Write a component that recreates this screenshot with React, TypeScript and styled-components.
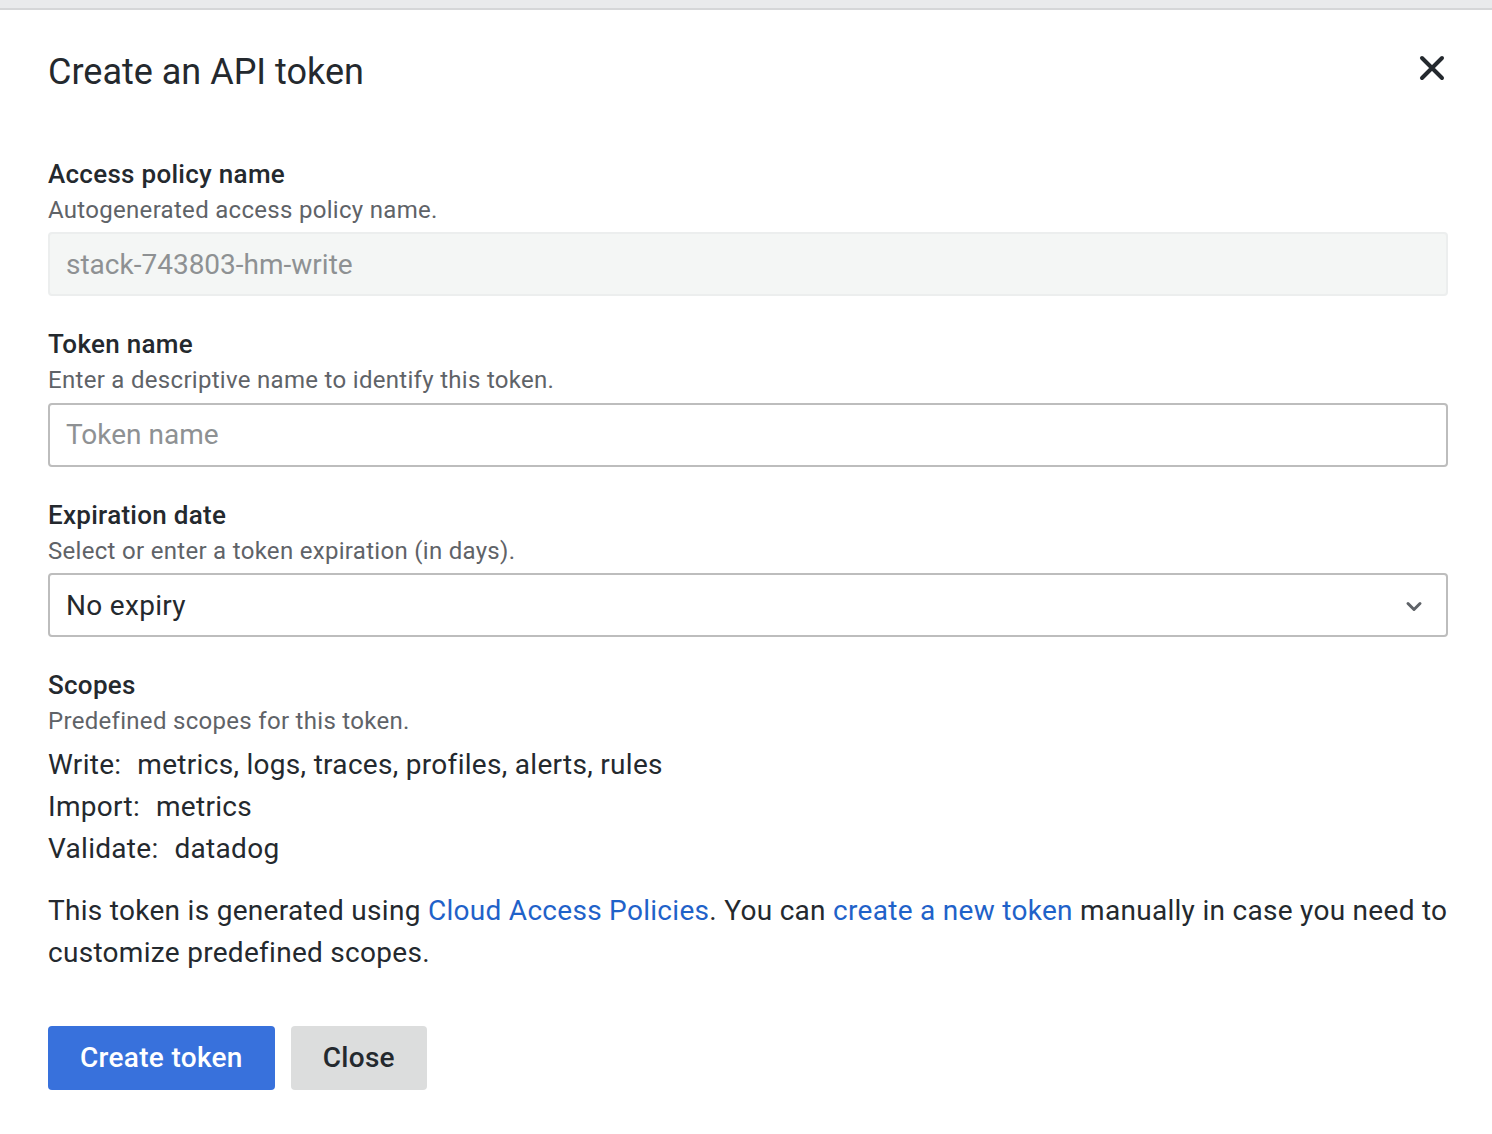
import React from "react";
import styled, { createGlobalStyle } from "styled-components";

const GlobalStyle = createGlobalStyle`
  html, body {
    margin: 0;
    padding: 0;
    background: #ffffff;
    font-family: Roboto, "Liberation Sans", sans-serif;
    color: #24292e;
  }
`;

const Backdrop = styled.div`
  height: 8px;
  background: #e9eaec;
  border-bottom: 2px solid #d5d6d8;
`;

const Modal = styled.div`
  padding: 0 44px 44px 48px;
  height: 1124px;
  box-sizing: border-box;
  background: #ffffff;
  border-radius: 4px 4px 0 0;
`;

const ModalHeader = styled.header`
  display: flex;
  justify-content: space-between;
  align-items: flex-start;
  height: 146px;
  padding-top: 39px;
  box-sizing: border-box;
`;

const Title = styled.h2`
  margin: 0;
  font-size: 36px;
  line-height: 46px;
  font-weight: 400;
  color: #24292e;
`;

const CloseIcon = styled.button`
  display: flex;
  padding: 0;
  margin: 3px 0 0;
  border: 0;
  background: none;
  color: #24292e;
`;

const Field = styled.div`
  margin-bottom: 30px;
`;

const Label = styled.div`
  font-size: 26px;
  line-height: 36px;
  font-weight: 500;
  letter-spacing: 0.28px;
  color: #24292e;
`;

const Description = styled.div`
  font-size: 24px;
  line-height: 36px;
  letter-spacing: 0.3px;
  margin-bottom: 4.4px;
  color: #5f6368;
`;

const InputBox = styled.div<{ $disabled?: boolean }>`
  display: flex;
  align-items: center;
  justify-content: space-between;
  height: 64px;
  box-sizing: border-box;
  padding: 0 22px 0 16px;
  font-size: 28px;
  border-radius: 4px;
  border: 2px solid ${(p) => (p.$disabled ? "#eceeee" : "#bdbdbd")};
  background: ${(p) => (p.$disabled ? "#f4f6f5" : "#ffffff")};
`;

const Placeholder = styled.span`
  color: #8e9193;
`;

const Value = styled.span`
  letter-spacing: 0.3px;
  color: #24292e;
`;

const ScopeList = styled.div`
  margin-top: 1px;
`;

const ScopeRow = styled.div`
  font-size: 28px;
  line-height: 42px;
  letter-spacing: 0.3px;
  color: #24292e;
  white-space: pre;
`;

const ScopeName = styled.span`
  margin-right: 1.4px;
`;

const Paragraph = styled.p`
  margin: 20px -4px 52px 0;
  font-size: 28px;
  line-height: 42px;
  letter-spacing: 0.29px;
  color: #24292e;
`;

const TextLink = styled.a`
  color: #1f62c9;
  text-decoration: none;
`;

const Actions = styled.div`
  display: flex;
  gap: 16px;
`;

const Button = styled.button<{ $primary?: boolean }>`
  height: 64px;
  padding: 0 32px;
  border: 0;
  border-radius: 4px;
  font-family: inherit;
  font-size: 28px;
  font-weight: 500;
  letter-spacing: 0.3px;
  background: ${(p) => (p.$primary ? "#3871dc" : "#dcdddd")};
  color: ${(p) => (p.$primary ? "#ffffff" : "#24292e")};
`;

const App: React.FC = () => (
  <>
    <GlobalStyle />
    <Backdrop />
    <Modal>
      <ModalHeader>
        <Title>Create an API token</Title>
        <CloseIcon aria-label="Close">
          <svg width="32" height="32" viewBox="0 0 32 32" fill="none">
            <path d="M6 6L26 26M26 6L6 26" stroke="currentColor" strokeWidth="4" strokeLinecap="round" />
          </svg>
        </CloseIcon>
      </ModalHeader>

      <Field>
        <Label>Access policy name</Label>
        <Description>Autogenerated access policy name.</Description>
        <InputBox $disabled>
          <Placeholder>stack-743803-hm-write</Placeholder>
        </InputBox>
      </Field>

      <Field>
        <Label>Token name</Label>
        <Description>Enter a descriptive name to identify this token.</Description>
        <InputBox>
          <Placeholder>Token name</Placeholder>
        </InputBox>
      </Field>

      <Field>
        <Label>Expiration date</Label>
        <Description>Select or enter a token expiration (in days).</Description>
        <InputBox>
          <Value>No expiry</Value>
          <svg width="20" height="16" viewBox="0 0 20 16" fill="none">
            <path d="M4 6.5L10 12.5L16 6.5" stroke="#5f6368" strokeWidth="3" strokeLinecap="round" strokeLinejoin="round" />
          </svg>
        </InputBox>
      </Field>

      <Label>Scopes</Label>
      <Description>Predefined scopes for this token.</Description>
      <ScopeList>
        <ScopeRow><ScopeName>Write:  </ScopeName>metrics, logs, traces, profiles, alerts, rules</ScopeRow>
        <ScopeRow><ScopeName>Import:  </ScopeName>metrics</ScopeRow>
        <ScopeRow><ScopeName>Validate:  </ScopeName>datadog</ScopeRow>
      </ScopeList>

      <Paragraph>
        This token is generated using <TextLink href="#">Cloud Access Policies</TextLink>. You can{" "}
        <TextLink href="#">create a new token</TextLink> manually in case you need to customize predefined scopes.
      </Paragraph>

      <Actions>
        <Button $primary>Create token</Button>
        <Button>Close</Button>
      </Actions>
    </Modal>
  </>
);

export default App;
